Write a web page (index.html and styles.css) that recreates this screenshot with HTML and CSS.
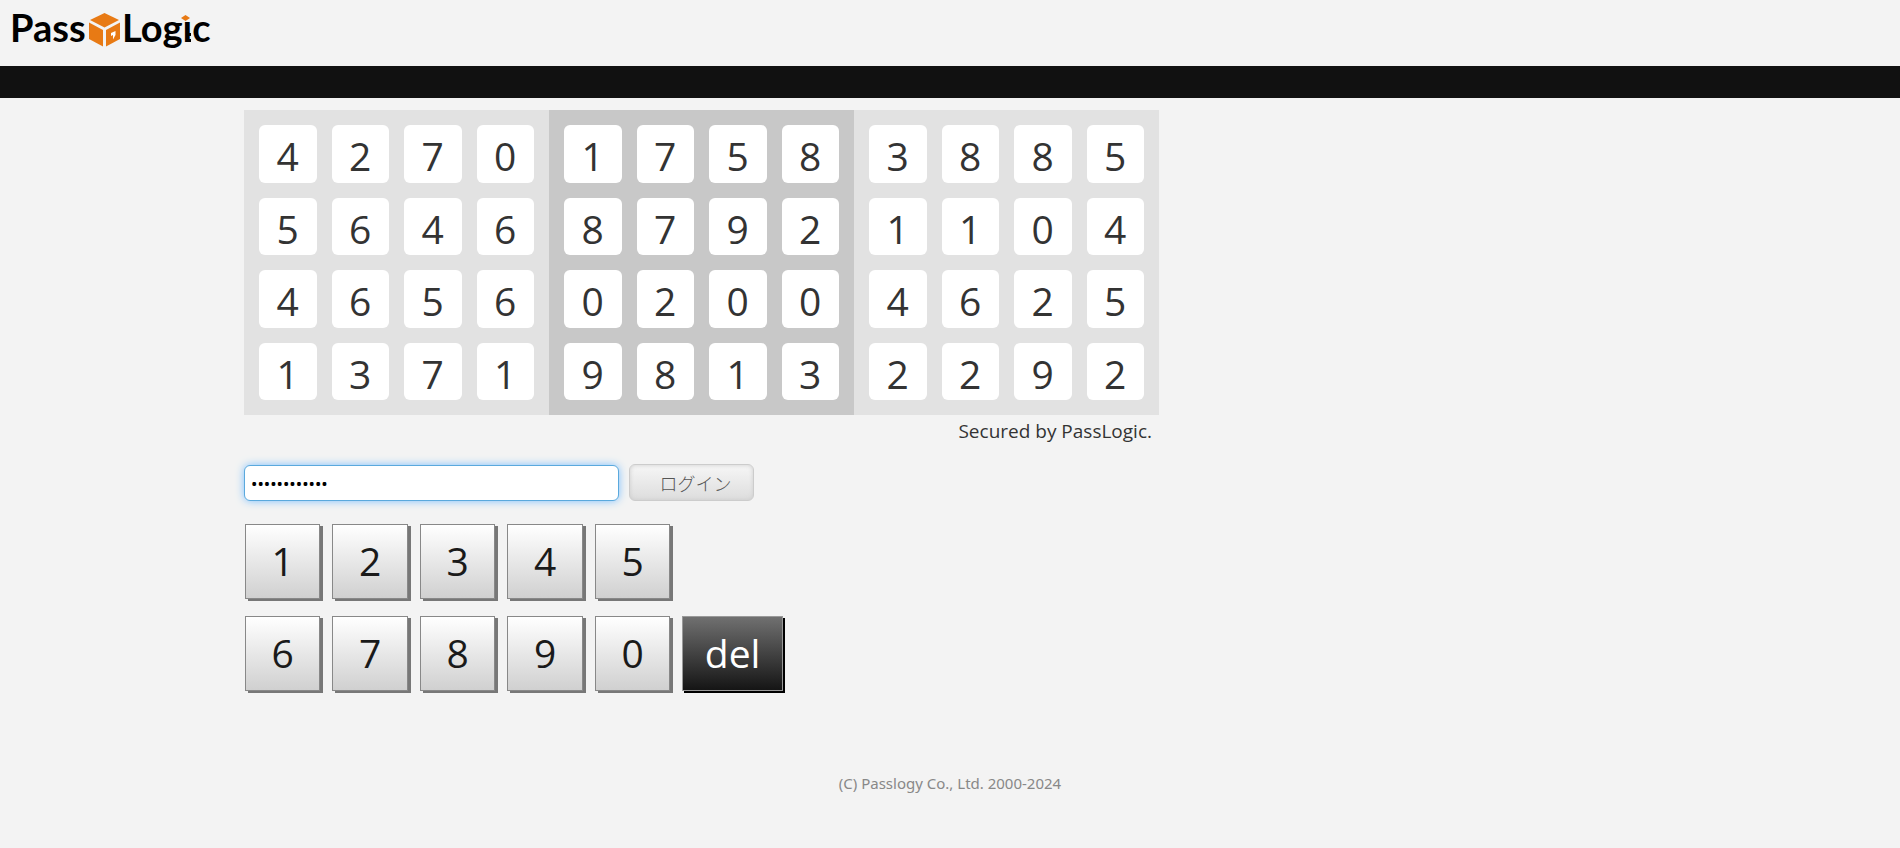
FILE: index.html
```
<!DOCTYPE html>
<html lang="ja">
<head>
    <meta charset="UTF-8">
    <meta name="viewport" content="width=device-width, initial-scale=1.0">
    <title>PassLogic</title>
    <link rel="stylesheet" href="styles.css">
</head>
<body>
<header>
    <a class="logo" href="#" aria-label="PassLogic">
        <svg width="220" height="60" viewBox="-8 -8 220 60">
            <g class="logo-text">
                <text x="-2" y="34">Pass</text>
                <text x="110" y="34">Logıc</text>
            </g>
            <g fill="#e87a14">
                <path d="M92.500 5 L107 12 L92.500 19.500 L78 12 Z"/>
                <path d="M77 14.500 L91 22 V38.500 L77 31 Z"/>
                <path d="M108 14.500 L94 22 V38.500 L108 31 Z"/>
                <path d="M173.500 7 L178 10 L173.500 13 L169 10 Z"/>
            </g>
            <path fill="#fff" d="M99 25 L103.500 23 V27 L101 31.500 V27 L99 28 Z"/>
            <path fill="#000" d="M174 25 h5 v3 h-5 z M174 31 h5 v3 h-5 z"/>
        </svg>
    </a>
</header>
<div class="bar"></div>

<main>
    <!-- Random number table -->
    <div class="matrix">
        <div class="block">
            <span>4</span><span>2</span><span>7</span><span>0</span>
            <span>5</span><span>6</span><span>4</span><span>6</span>
            <span>4</span><span>6</span><span>5</span><span>6</span>
            <span>1</span><span>3</span><span>7</span><span>1</span>
        </div>
        <div class="block dark">
            <span>1</span><span>7</span><span>5</span><span>8</span>
            <span>8</span><span>7</span><span>9</span><span>2</span>
            <span>0</span><span>2</span><span>0</span><span>0</span>
            <span>9</span><span>8</span><span>1</span><span>3</span>
        </div>
        <div class="block">
            <span>3</span><span>8</span><span>8</span><span>5</span>
            <span>1</span><span>1</span><span>0</span><span>4</span>
            <span>4</span><span>6</span><span>2</span><span>5</span>
            <span>2</span><span>2</span><span>9</span><span>2</span>
        </div>
    </div>
    <p class="secured">Secured by PassLogic.</p>

    <form id="login-form">
        <div class="login">
            <input type="password" id="password" name="password" value="427017583885" aria-label="パスワード">
            <button type="submit" class="login-button">ログイン</button>
        </div>

        <!-- Keypad -->
        <div class="keypad">
            <button type="button" class="key">1</button>
            <button type="button" class="key">2</button>
            <button type="button" class="key">3</button>
            <button type="button" class="key">4</button>
            <button type="button" class="key">5</button>
            <button type="button" class="key first">6</button>
            <button type="button" class="key">7</button>
            <button type="button" class="key">8</button>
            <button type="button" class="key">9</button>
            <button type="button" class="key">0</button>
            <button type="button" class="key del">del</button>
        </div>
    </form>
</main>

<footer>(C) Passlogy Co., Ltd. 2000-2024</footer>

<script>
    const password = document.getElementById('password');

    document.querySelectorAll('.key').forEach(function(key) {
        key.addEventListener('click', function() {
            if (key.classList.contains('del')) {
                password.value = password.value.slice(0, -1);
            } else {
                password.value += key.textContent;
            }
        });
    });

    document.getElementById('login-form').addEventListener('submit', function(event) {
        event.preventDefault();
    });
</script>
</body>
</html>
```
FILE: styles.css
```
* {
    box-sizing: border-box;
}

body {
    font-family: "Open Sans", "Noto Sans", "Noto Sans CJK JP", sans-serif;
    background-color: #f3f3f3;
    color: #333333;
    margin: 0;
}

header {
    height: 66px;
    padding: 0 4px;
}

.logo {
    display: inline-block;
}

.logo svg {
    display: block;
}

.logo-text {
    font-family: Lato, sans-serif;
    font-size: 38px;
    font-weight: bold;
    fill: #000000;
}

.bar {
    height: 32px;
    background-color: #111111;
}

main {
    max-width: 1412px;
    margin: 0 auto;
    padding-top: 12px;
}

.matrix {
    display: grid;
    grid-template-columns: repeat(3, 1fr);
    max-width: 915px;
}

.block {
    display: grid;
    grid-template-columns: repeat(4, 1fr);
    gap: 15px;
    padding: 15px;
    background-color: #e2e2e2;
}

.block.dark {
    background-color: #c8c8c8;
}

.block span {
    display: flex;
    align-items: center;
    justify-content: center;
    aspect-ratio: 1;
    padding-top: 5px;
    border-radius: 6px;
    background-color: #ffffff;
    font-size: 39px;
    line-height: 48px;
}

.secured {
    max-width: 915px;
    margin: 0;
    padding-right: 7px;
    font-size: 19px;
    line-height: 32px;
    text-align: right;
}

.login {
    display: flex;
    align-items: center;
    gap: 10px;
    margin-top: 17px;
}

.login input {
    width: 375px;
    height: 36px;
    padding: 2px 6px 0;
    border: 1px solid #5aa9dd;
    border-radius: 6px;
    outline: none;
    background-color: #ffffff;
    box-shadow: 0 0 8px #7cc0ff;
    color: #000000;
    font-family: "Noto Sans", sans-serif;
    font-size: 17px;
}

.login-button {
    width: 125px;
    height: 37px;
    padding: 0 0 0 8px;
    border: 1px solid #cccccc;
    border-radius: 6px;
    background: linear-gradient(#f6f6f6, #dddddd);
    box-shadow: inset 0 0 4px #cccccc;
    color: #555555;
    font-family: "Noto Sans CJK JP", sans-serif;
    font-size: 18px;
    font-weight: 300;
}

.keypad {
    display: grid;
    grid-template-columns: repeat(5, 3fr) 4fr;
    gap: 17px 12px;
    max-width: 539px;
    margin-top: 23px;
    padding-left: 1px;
}

.key {
    height: 75px;
    padding: 0 0 3px;
    border: 1px solid #888888;
    background: linear-gradient(#ffffff, #d0d0d0);
    box-shadow: 3px 2px 0 #777777;
    color: #1a1a1a;
    font-family: inherit;
    font-size: 39px;
    cursor: pointer;
}

.key.first {
    grid-column: 1;
}

.key.del {
    border-color: #999999;
    background: linear-gradient(#707070, #151515);
    box-shadow: 2px 2px 0 #000000;
    color: #ffffff;
}

footer {
    margin-top: 80px;
    color: #888888;
    font-family: "Noto Sans", sans-serif;
    font-size: 15px;
    line-height: 24px;
    text-align: center;
}
```
